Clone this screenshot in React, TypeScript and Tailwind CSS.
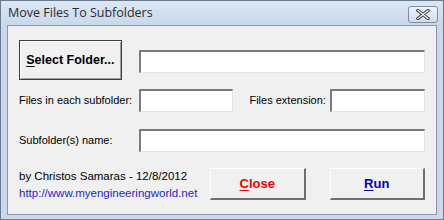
import React from "react";

const sunken =
  "h-[23px] bg-white border-t-2 border-l-2 border-b border-r border-t-[#7a7a7a] border-l-[#7a7a7a] border-b-[#e3e3e3] border-r-[#e3e3e3]";

const raised =
  "flex items-center justify-center bg-[#f0f0f0] border border-t-white border-l-white border-b-2 border-r-2 border-b-[#6e6e6e] border-r-[#6e6e6e] font-bold text-[13px]";

function Field({ w }: { w: string }) {
  return <div className={`${sunken} ${w}`} />;
}

export default function App() {
  return (
    <div className="w-[444px] h-[220px] flex flex-col bg-[#c9d8ea] border border-[#6b7b8f] font-['Liberation_Sans',Arial,sans-serif] text-[11px] text-black">
      {/* title bar */}
      <div className="h-[24px] flex items-center justify-between pl-[7px] pr-[5px] bg-gradient-to-b from-[#dce7f4] to-[#c8d8ec]">
        <span className="font-['Open_Sans',sans-serif] text-[12.5px] text-[#2b2b2b] leading-none pt-[1px]">
          Move Files To Subfolders
        </span>
        <div className="w-[30px] h-[17px] mt-[2px] rounded-[3px] border border-[#7d8ea3] bg-gradient-to-b from-[#eef3f9] to-[#d2dcea] flex items-center justify-center">
          <svg width="14" height="11" viewBox="0 0 14 11">
            <path d="M2 1.5 L12 9.5 M12 1.5 L2 9.5" stroke="#4a4f57" strokeWidth="3.4" strokeLinecap="square" />
            <path d="M2 1.5 L12 9.5 M12 1.5 L2 9.5" stroke="#f4f6f9" strokeWidth="1.2" strokeLinecap="square" />
          </svg>
        </div>
      </div>

      {/* client area */}
      <div className="flex-1 mx-[6px] mb-[4px] bg-[#f0f0f0] border border-[#8a97a8] flex flex-col pl-[11px] pr-[11px] pt-[14px]">
        <div className="flex items-center gap-[17px]">
          <div className="w-[103px] h-[40px] flex items-center justify-center border border-[#3c3c3c] shadow-[inset_1px_1px_0_#ffffff,inset_-1px_-1px_0_#a0a0a0] font-bold text-[12.5px] pt-[1px]">
            <span>
              <span className="underline underline-offset-2">S</span>elect Folder...
            </span>
          </div>
          <Field w="w-[287px] mt-[2px]" />
        </div>

        <div className="flex items-center mt-[9px]">
          <span className="w-[120px]">Files in each subfolder:</span>
          <Field w="w-[95px]" />
          <span className="ml-[16px] w-[81px]">Files extension:</span>
          <Field w="w-[95px]" />
        </div>

        <div className="flex items-center mt-[17px]">
          <span className="w-[120px]">Subfolder(s) name:</span>
          <Field w="w-[287px]" />
        </div>

        <div className="flex items-start mt-[16px]">
          <div className="w-[192px] flex flex-col pt-[0px] text-[11.5px] leading-[17px]">
            <span>by Christos Samaras - 12/8/2012</span>
            <span className="text-[#1f1fd6]">http://www.myengineeringworld.net</span>
          </div>
          <div className={`${raised} w-[96px] h-[32px] text-[#ee0000]`}>
            <span>
              <span className="underline underline-offset-2">C</span>lose
            </span>
          </div>
          <div className={`${raised} w-[96px] h-[32px] ml-[24px] text-[#0000c8]`}>
            <span>
              <span className="underline underline-offset-2">R</span>un
            </span>
          </div>
        </div>
      </div>
    </div>
  );
}
